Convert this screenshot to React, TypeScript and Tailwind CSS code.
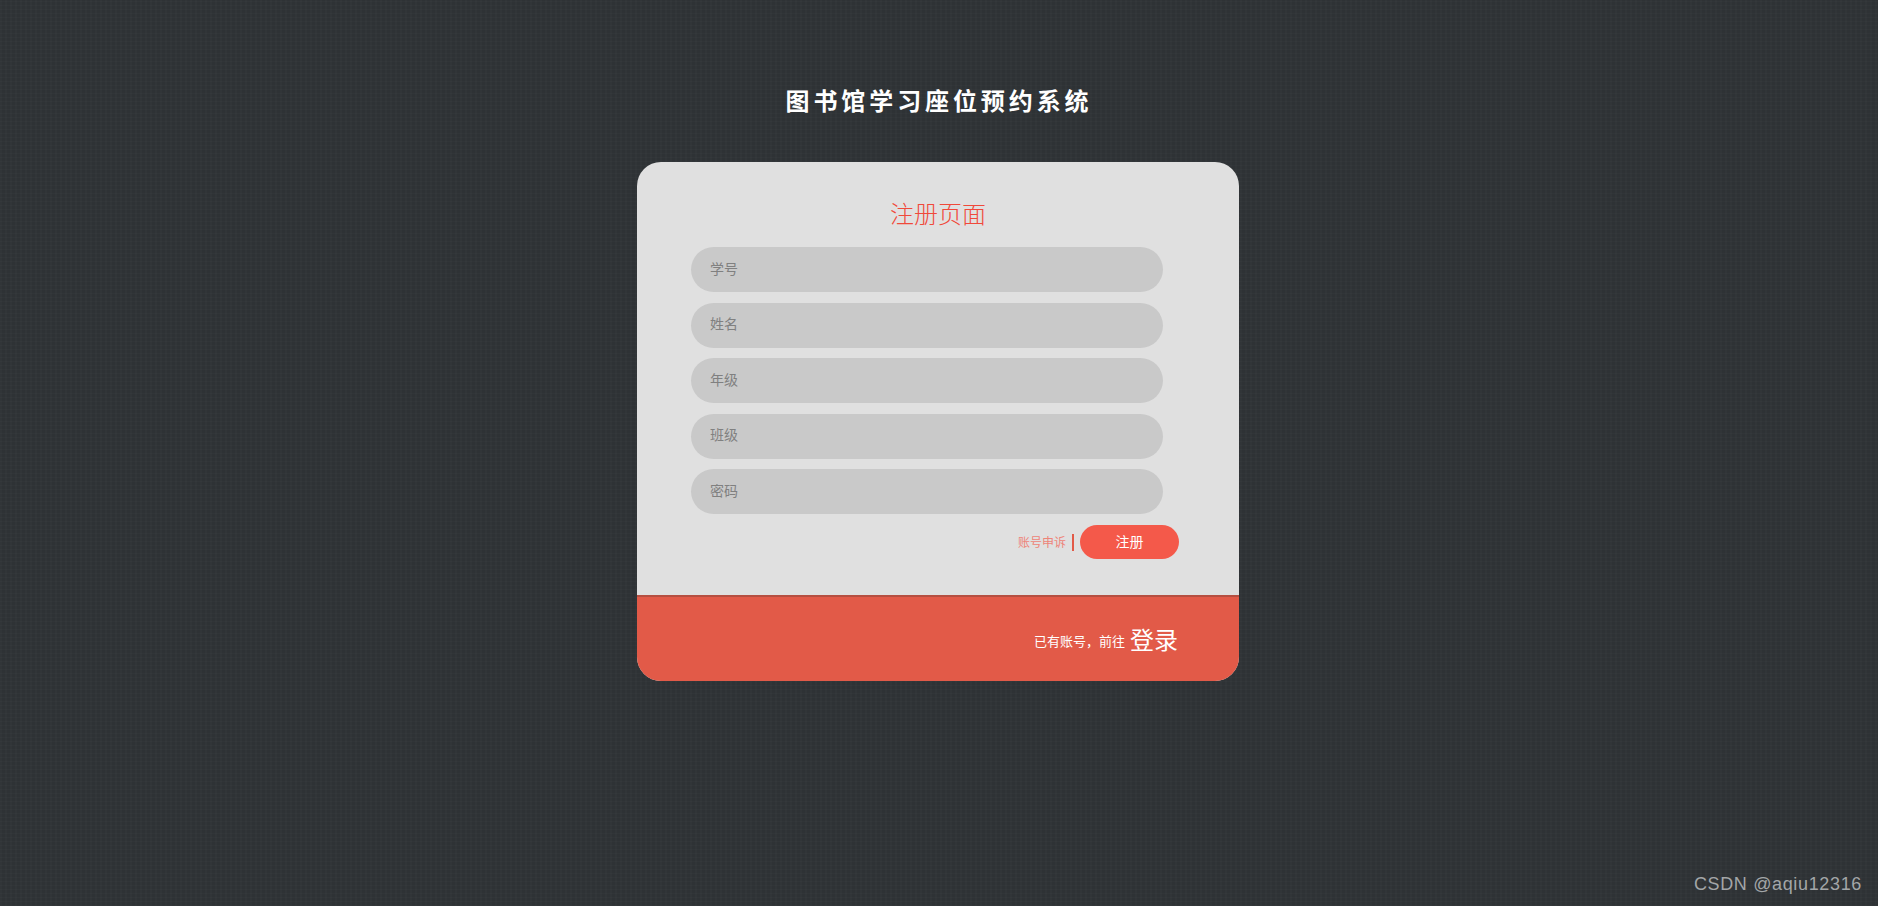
const fields = ['学号', '姓名', '年级', '班级', '密码'];

const cjk = "font-['Noto_Sans_CJK_SC',sans-serif]";

export default function App() {
  return (
    <div className="relative h-[906px] overflow-hidden bg-[#303437] bg-[repeating-linear-gradient(0deg,rgba(255,255,255,0.012)_0px,rgba(255,255,255,0.012)_1px,rgba(0,0,0,0.02)_1px,rgba(0,0,0,0.02)_4px),repeating-linear-gradient(90deg,rgba(255,255,255,0.01)_0px,rgba(255,255,255,0.01)_2px,rgba(0,0,0,0.025)_2px,rgba(0,0,0,0.025)_5px)]">
      <div className="flex flex-col items-center pr-[2px]">
        <h1 className="mt-[84px] ml-[2px] h-[36px] text-[24px] leading-[36px] font-bold tracking-[3.9px] text-white font-['Liberation_Serif','Noto_Sans_CJK_SC',serif]">
          图书馆学习座位预约系统
        </h1>

        <div className={`mt-[42px] w-[602px] overflow-hidden rounded-[24px] bg-[#e0e0e0] ${cjk}`}>
          <div className="h-[433px] pt-[33px] pl-[54px]">
            <h2 className="ml-[-54px] h-[36px] text-center text-[24px] leading-[36px] font-light text-[#f0493a]">注册页面</h2>
            <div className="mt-[16px] flex w-[472px] flex-col gap-[10.6px]">
              {fields.map((f) => (
                <input
                  key={f}
                  placeholder={f}
                  className="h-[45px] w-full rounded-full bg-[#c9c9c9] pb-[4px] pl-[19px] text-[14px] outline-none placeholder:text-[#808080]"
                />
              ))}
            </div>
            <div className="mt-[11px] flex w-[488px] items-center justify-end">
              <a className="text-[12px] text-[#ee8478]">账号申诉</a>
              <span className="mr-[6px] ml-[6px] h-[17px] w-[2px] bg-[#e25a48]" />
              <button className="h-[34px] w-[99px] rounded-full bg-[#f4594a] pb-[2px] text-[14px] text-white">注册</button>
            </div>
          </div>

          <div className="flex h-[86px] items-center justify-end border-t-2 border-[#b54f41] bg-[#e25a48] pr-[61px] text-white">
            <span className="pt-[3px] text-[13px]">已有账号，前往</span>
            <a className="ml-[5px] text-[24px] leading-none">登录</a>
          </div>
        </div>
      </div>

      <div className="absolute right-[16px] bottom-[8px] text-[18px] tracking-[0.65px] text-[#a3a6a8] font-['Liberation_Sans',sans-serif]">
        CSDN @aqiu12316
      </div>
    </div>
  );
}
